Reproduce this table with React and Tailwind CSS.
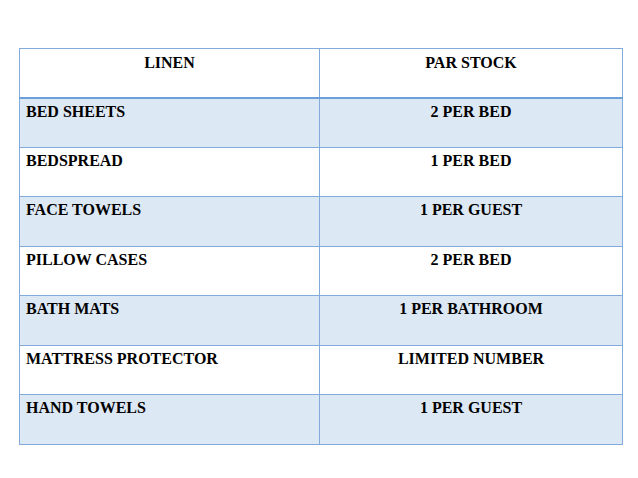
import React from 'react'

const rows = [
  ['BED SHEETS', '2 PER BED'],
  ['BEDSPREAD', '1 PER BED'],
  ['FACE TOWELS', '1 PER GUEST'],
  ['PILLOW CASES', '2 PER BED'],
  ['BATH MATS', '1 PER BATHROOM'],
  ['MATTRESS PROTECTOR', 'LIMITED NUMBER'],
  ['HAND TOWELS', '1 PER GUEST'],
]

const App = () => {
  return (
    <div className="w-[638px] h-[478px] bg-white pt-[48px] pl-[19px] font-['Liberation_Serif',serif] font-bold text-[16px] text-black">
      <table className="w-[604px] border-collapse table-fixed">
        <colgroup>
          <col className="w-[300px]" />
          <col />
        </colgroup>
        <thead>
          <tr className="h-[49px] bg-white">
            <th className="border border-[#82abdc] border-b-2 border-b-[#6d9fd8] align-top text-center pt-[2px] font-bold">LINEN</th>
            <th className="border border-[#82abdc] border-b-2 border-b-[#6d9fd8] align-top text-center pt-[2px] font-bold">PAR STOCK</th>
          </tr>
        </thead>
        <tbody>
          {rows.map(([item, stock], i) => (
            <tr key={item} className={`h-[49.5px] ${i % 2 === 0 ? 'bg-[#dde8f5]' : 'bg-white'}`}>
              <td className="border border-[#82abdc] align-top text-left pl-[6px] pt-[1px]">{item}</td>
              <td className="border border-[#82abdc] align-top text-center pt-[1px]">{stock}</td>
            </tr>
          ))}
        </tbody>
      </table>
    </div>
  )
}

export default App
